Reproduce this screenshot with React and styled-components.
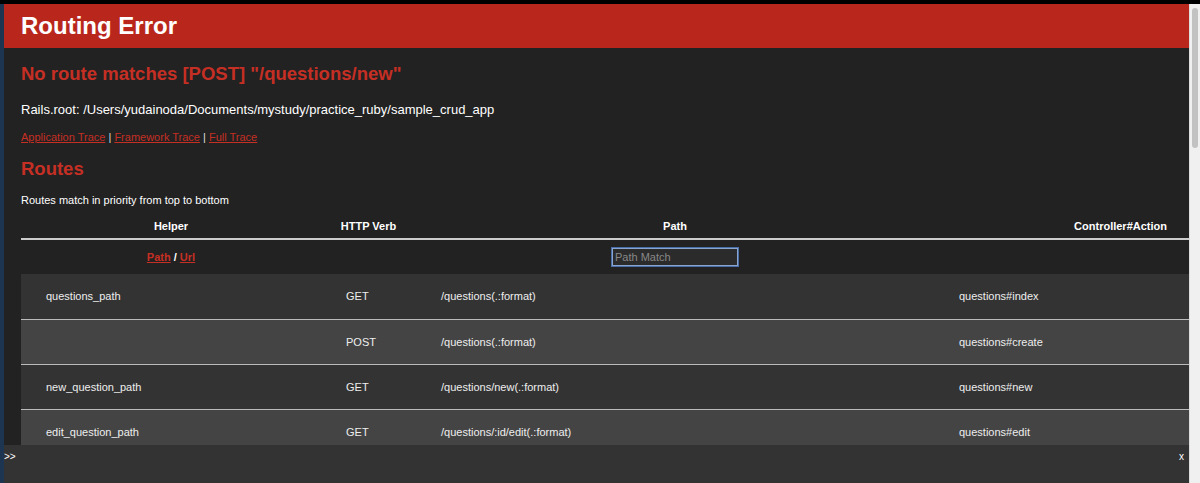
import React from "react";
import styled, { createGlobalStyle } from "styled-components";

const G = createGlobalStyle`
  html,body{margin:0;padding:0;height:483px;overflow:hidden;background:#000;}
  body{font-family:"Liberation Sans",Arial,sans-serif;}
`;
const Screen = styled.div`display:flex;height:483px;padding-top:4px;box-sizing:border-box;background:#000;`;
const Desktop = styled.div`width:4px;background:#1d3550;`;
const Win = styled.div`flex:1;display:flex;flex-direction:column;background:#222;overflow:hidden;position:relative;`;
const Scrollbar = styled.div`width:11px;background:#f0f0f0;border-left:1px solid #ddd;display:flex;justify-content:center;padding-top:4px;box-sizing:border-box;`;
const Thumb = styled.div`width:6px;height:140px;border-radius:3px;background:#c2c2c2;`;
const Header = styled.header`background:#b9271c;height:44px;display:flex;align-items:center;padding-left:17px;`;
const H1 = styled.h1`margin:0;color:#fff;font-size:24px;font-weight:bold;`;
const Main = styled.div`flex:1;padding:0 0 0 17px;overflow:hidden;`;
const H2 = styled.h2`margin:15px 0 0;color:#c52f24;font-size:18.5px;font-weight:bold;`;
const Root = styled.p`margin:17px 0 0;color:#fff;font-size:13px;`;
const Links = styled.p`margin:14px 0 0;color:#ddd;font-size:11px;`;
const A = styled.a`color:#c52f24;text-decoration:underline;font-weight:${p=>p.$b?"bold":"normal"};`;
const H2b = styled(H2)`margin-top:15px;`;
const Sub = styled.p`margin:14px 0 0;color:#fff;font-size:11px;`;
const Table = styled.table`border-collapse:collapse;margin-top:12px;width:1168px;table-layout:fixed;font-size:11px;`;
const Th = styled.th`color:#fff;font-weight:bold;text-align:${p=>p.$r?"right":"center"};padding:0 ${p=>p.$r?"22px":"0"} 4px 0;height:16px;border-bottom:2px solid #ccc;`;
const FilterRow = styled.tr`height:35px;`;
const Td = styled.td`color:#eee;padding:0 0 0 25px;font-size:11px;`;
const Center = styled.td`text-align:center;color:#fff;font-weight:bold;`;
const Row = styled.tr`height:45px;background:${p=>p.$alt?"#444":"#333"};border-bottom:1px solid #bbb;`;
const Input = styled.input`width:120px;height:14px;background:#2b2b2b;border:1px solid #8aa4d0;box-shadow:0 0 0 1px #4a6ea8;color:#fff;font-size:11px;padding:1px 2px;font-family:inherit;&::placeholder{color:#888;}`;
const Console = styled.div`height:38px;background:#333;color:#fff;font-size:10px;display:flex;justify-content:space-between;padding:6px 5px 0 0;box-sizing:border-box;font-family:"Liberation Sans",Arial,sans-serif;`;

const rows=[["questions_path","GET","/questions(.:format)","questions#index"],["","POST","/questions(.:format)","questions#create"],["new_question_path","GET","/questions/new(.:format)","questions#new"],["edit_question_path","GET","/questions/:id/edit(.:format)","questions#edit"]];

export default function App(){
  return <><G/><Screen><Desktop/><Win>
    <Header><H1>Routing Error</H1></Header>
    <Main>
      <H2>No route matches [POST] "/questions/new"</H2>
      <Root>Rails.root: /Users/yudainoda/Documents/mystudy/practice_ruby/sample_crud_app</Root>
      <Links><A href="#">Application Trace</A> | <A href="#">Framework Trace</A> | <A href="#">Full Trace</A></Links>
      <H2b>Routes</H2b>
      <Sub>Routes match in priority from top to bottom</Sub>
      <Table>
        <colgroup><col style={{width:300}}/><col style={{width:95}}/><col style={{width:518}}/><col/></colgroup>
        <thead><tr><Th>Helper</Th><Th>HTTP Verb</Th><Th>Path</Th><Th $r>Controller#Action</Th></tr></thead>
        <tbody>
          <FilterRow><Center><A $b href="#">Path</A> / <A $b href="#">Url</A></Center><td/><Center><Input placeholder="Path Match"/></Center><td/></FilterRow>
          {rows.map((r,i)=><Row key={i} $alt={i%2===1}>{r.map((c,j)=><Td key={j}>{c}</Td>)}</Row>)}
        </tbody>
      </Table>
    </Main>
    <Console><span>&gt;&gt;</span><span>x</span></Console>
  </Win><Scrollbar><Thumb/></Scrollbar></Screen></>;
}
